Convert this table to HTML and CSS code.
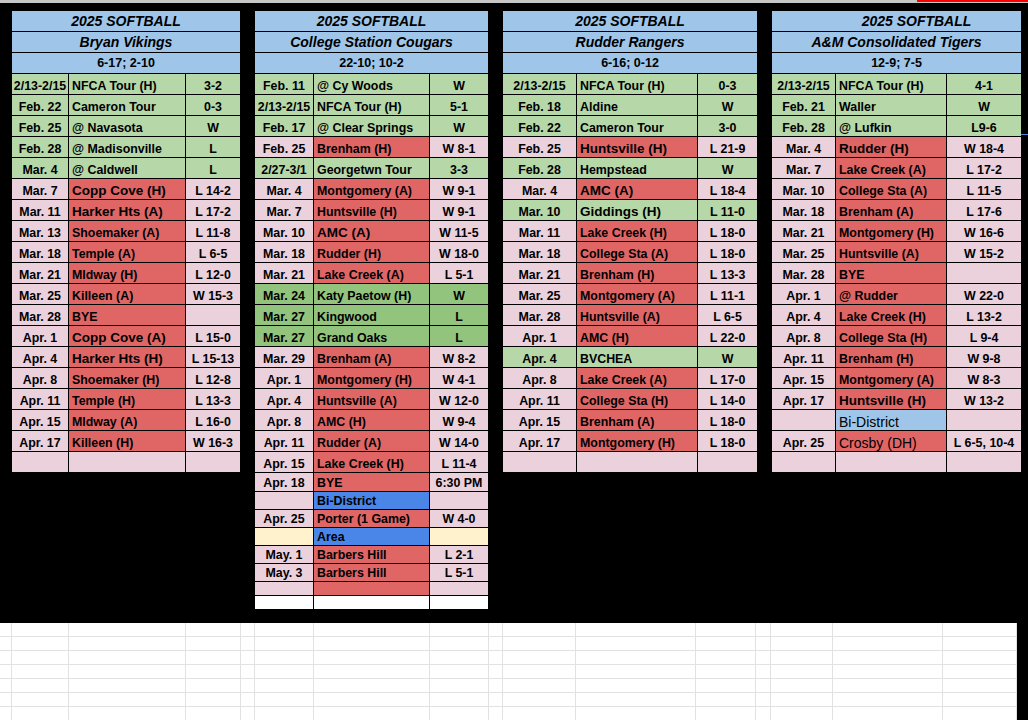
FILE: index.html
```html
<!DOCTYPE html>
<html>
<head>
<meta charset="utf-8">
<link rel="stylesheet" href="styles.css">
</head>
<body>
<div class="topbar"><div class="redline"></div></div>
<div class="tick"></div>
<div class="sheet">
  <div class="t bryan">
    <div class="hd ti">2025 SOFTBALL</div>
    <div class="hd ti">Bryan Vikings</div>
    <div class="hd rec">6-17; 2-10</div>
    <div class="c d g">2/13-2/15</div><div class="c o g">NFCA Tour (H)</div><div class="c s g">3-2</div>
    <div class="c d g">Feb. 22</div><div class="c o g">Cameron Tour</div><div class="c s g">0-3</div>
    <div class="c d g">Feb. 25</div><div class="c o g">@ Navasota</div><div class="c s g">W</div>
    <div class="c d g">Feb. 28</div><div class="c o g">@ Madisonville</div><div class="c s g">L</div>
    <div class="c d g">Mar. 4</div><div class="c o g">@ Caldwell</div><div class="c s g">L</div>
    <div class="c d p">Mar. 7</div><div class="c o rd lg">Copp Cove (H)</div><div class="c s p">L 14-2</div>
    <div class="c d p">Mar. 11</div><div class="c o rd lg">Harker Hts (A)</div><div class="c s p">L 17-2</div>
    <div class="c d p">Mar. 13</div><div class="c o rd">Shoemaker (A)</div><div class="c s p">L 11-8</div>
    <div class="c d p">Mar. 18</div><div class="c o rd">Temple (A)</div><div class="c s p">L 6-5</div>
    <div class="c d p">Mar. 21</div><div class="c o rd">Mldway (H)</div><div class="c s p">L 12-0</div>
    <div class="c d p">Mar. 25</div><div class="c o rd">Killeen (A)</div><div class="c s p">W 15-3</div>
    <div class="c d p">Mar. 28</div><div class="c o rd">BYE</div><div class="c s p"></div>
    <div class="c d p">Apr. 1</div><div class="c o rd lg">Copp Cove (A)</div><div class="c s p">L 15-0</div>
    <div class="c d p">Apr. 4</div><div class="c o rd lg">Harker Hts (H)</div><div class="c s p">L 15-13</div>
    <div class="c d p">Apr. 8</div><div class="c o rd">Shoemaker (H)</div><div class="c s p">L 12-8</div>
    <div class="c d p">Apr. 11</div><div class="c o rd">Temple (H)</div><div class="c s p">L 13-3</div>
    <div class="c d p">Apr. 15</div><div class="c o rd">Mldway (A)</div><div class="c s p">L 16-0</div>
    <div class="c d p">Apr. 17</div><div class="c o rd">Killeen (H)</div><div class="c s p">W 16-3</div>
    <div class="c d p"></div><div class="c o p"></div><div class="c s p"></div>
  </div>

  <div class="t cs">
    <div class="hd ti">2025 SOFTBALL</div>
    <div class="hd ti">College Station Cougars</div>
    <div class="hd rec">22-10; 10-2</div>
    <div class="c d g">Feb. 11</div><div class="c o g">@ Cy Woods</div><div class="c s g">W</div>
    <div class="c d g">2/13-2/15</div><div class="c o g">NFCA Tour (H)</div><div class="c s g">5-1</div>
    <div class="c d g">Feb. 17</div><div class="c o g">@ Clear Springs</div><div class="c s g">W</div>
    <div class="c d p">Feb. 25</div><div class="c o rd">Brenham (H)</div><div class="c s p">W 8-1</div>
    <div class="c d g">2/27-3/1</div><div class="c o g">Georgetwn Tour</div><div class="c s g">3-3</div>
    <div class="c d p">Mar. 4</div><div class="c o rd">Montgomery (A)</div><div class="c s p">W 9-1</div>
    <div class="c d p">Mar. 7</div><div class="c o rd">Huntsville (H)</div><div class="c s p">W 9-1</div>
    <div class="c d p">Mar. 10</div><div class="c o rd lg">AMC (A)</div><div class="c s p">W 11-5</div>
    <div class="c d p">Mar. 18</div><div class="c o rd">Rudder (H)</div><div class="c s p">W 18-0</div>
    <div class="c d p">Mar. 21</div><div class="c o rd">Lake Creek (A)</div><div class="c s p">L 5-1</div>
    <div class="c d dg">Mar. 24</div><div class="c o dg">Katy Paetow (H)</div><div class="c s dg">W</div>
    <div class="c d dg">Mar. 27</div><div class="c o dg">Kingwood</div><div class="c s dg">L</div>
    <div class="c d dg">Mar. 27</div><div class="c o dg">Grand Oaks</div><div class="c s dg">L</div>
    <div class="c d p">Mar. 29</div><div class="c o rd">Brenham (A)</div><div class="c s p">W 8-2</div>
    <div class="c d p">Apr. 1</div><div class="c o rd">Montgomery (H)</div><div class="c s p">W 4-1</div>
    <div class="c d p">Apr. 4</div><div class="c o rd">Huntsville (A)</div><div class="c s p">W 12-0</div>
    <div class="c d p">Apr. 8</div><div class="c o rd">AMC (H)</div><div class="c s p">W 9-4</div>
    <div class="c d p">Apr. 11</div><div class="c o rd">Rudder (A)</div><div class="c s p">W 14-0</div>
    <div class="c d p">Apr. 15</div><div class="c o rd">Lake Creek (H)</div><div class="c s p">L 11-4</div>
    <div class="c d p h18">Apr. 18</div><div class="c o rd h18">BYE</div><div class="c s p h18">6:30 PM</div>
    <div class="c d p h17"></div><div class="c o b h17">Bi-District</div><div class="c s p h17"></div>
    <div class="c d p h17">Apr. 25</div><div class="c o rd h17">Porter (1 Game)</div><div class="c s p h17">W 4-0</div>
    <div class="c d y h17"></div><div class="c o b h17">Area</div><div class="c s y h17"></div>
    <div class="c d p h17">May. 1</div><div class="c o rd h17">Barbers Hill</div><div class="c s p h17">L 2-1</div>
    <div class="c d p h17">May. 3</div><div class="c o rd h17">Barbers Hill</div><div class="c s p h17">L 5-1</div>
    <div class="c d p h13"></div><div class="c o rd h13"></div><div class="c s p h13"></div>
    <div class="c d w h13"></div><div class="c o w h13"></div><div class="c s w h13"></div>
  </div>

  <div class="t rud">
    <div class="hd ti">2025 SOFTBALL</div>
    <div class="hd ti">Rudder Rangers</div>
    <div class="hd rec">6-16; 0-12</div>
    <div class="c d g">2/13-2/15</div><div class="c o g">NFCA Tour (H)</div><div class="c s g">0-3</div>
    <div class="c d g">Feb. 18</div><div class="c o g">Aldine</div><div class="c s g">W</div>
    <div class="c d g">Feb. 22</div><div class="c o g">Cameron Tour</div><div class="c s g">3-0</div>
    <div class="c d p">Feb. 25</div><div class="c o rd lg">Huntsville (H)</div><div class="c s p">L 21-9</div>
    <div class="c d g">Feb. 28</div><div class="c o g">Hempstead</div><div class="c s g">W</div>
    <div class="c d p">Mar. 4</div><div class="c o rd lg">AMC (A)</div><div class="c s p">L 18-4</div>
    <div class="c d g">Mar. 10</div><div class="c o g lg">Giddings (H)</div><div class="c s g">L 11-0</div>
    <div class="c d p">Mar. 11</div><div class="c o rd">Lake Creek (H)</div><div class="c s p">L 18-0</div>
    <div class="c d p">Mar. 18</div><div class="c o rd">College Sta (A)</div><div class="c s p">L 18-0</div>
    <div class="c d p">Mar. 21</div><div class="c o rd">Brenham (H)</div><div class="c s p">L 13-3</div>
    <div class="c d p">Mar. 25</div><div class="c o rd">Montgomery (A)</div><div class="c s p">L 11-1</div>
    <div class="c d p">Mar. 28</div><div class="c o rd">Huntsville (A)</div><div class="c s p">L 6-5</div>
    <div class="c d p">Apr. 1</div><div class="c o rd">AMC (H)</div><div class="c s p">L 22-0</div>
    <div class="c d g">Apr. 4</div><div class="c o g">BVCHEA</div><div class="c s g">W</div>
    <div class="c d p">Apr. 8</div><div class="c o rd">Lake Creek (A)</div><div class="c s p">L 17-0</div>
    <div class="c d p">Apr. 11</div><div class="c o rd">College Sta (H)</div><div class="c s p">L 14-0</div>
    <div class="c d p">Apr. 15</div><div class="c o rd">Brenham (A)</div><div class="c s p">L 18-0</div>
    <div class="c d p">Apr. 17</div><div class="c o rd">Montgomery (H)</div><div class="c s p">L 18-0</div>
    <div class="c d p"></div><div class="c o p"></div><div class="c s p"></div>
  </div>

  <div class="t amc">
    <div class="hd ti shift">2025 SOFTBALL</div>
    <div class="hd ti">A&amp;M Consolidated Tigers</div>
    <div class="hd rec">12-9; 7-5</div>
    <div class="c d g">2/13-2/15</div><div class="c o g">NFCA Tour (H)</div><div class="c s g">4-1</div>
    <div class="c d g">Feb. 21</div><div class="c o g">Waller</div><div class="c s g">W</div>
    <div class="c d g">Feb. 28</div><div class="c o g">@ Lufkin</div><div class="c s g">L9-6</div>
    <div class="c d p">Mar. 4</div><div class="c o rd lg">Rudder (H)</div><div class="c s p">W 18-4</div>
    <div class="c d p">Mar. 7</div><div class="c o rd">Lake Creek (A)</div><div class="c s p">L 17-2</div>
    <div class="c d p">Mar. 10</div><div class="c o rd">College Sta (A)</div><div class="c s p">L 11-5</div>
    <div class="c d p">Mar. 18</div><div class="c o rd">Brenham (A)</div><div class="c s p">L 17-6</div>
    <div class="c d p">Mar. 21</div><div class="c o rd">Montgomery (H)</div><div class="c s p">W 16-6</div>
    <div class="c d p">Mar. 25</div><div class="c o rd">Huntsville (A)</div><div class="c s p">W 15-2</div>
    <div class="c d p">Mar. 28</div><div class="c o rd">BYE</div><div class="c s p"></div>
    <div class="c d p">Apr. 1</div><div class="c o rd">@ Rudder</div><div class="c s p">W 22-0</div>
    <div class="c d p">Apr. 4</div><div class="c o rd">Lake Creek (H)</div><div class="c s p">L 13-2</div>
    <div class="c d p">Apr. 8</div><div class="c o rd">College Sta (H)</div><div class="c s p">L 9-4</div>
    <div class="c d p">Apr. 11</div><div class="c o rd">Brenham (H)</div><div class="c s p">W 9-8</div>
    <div class="c d p">Apr. 15</div><div class="c o rd">Montgomery (A)</div><div class="c s p">W 8-3</div>
    <div class="c d p">Apr. 17</div><div class="c o rd lg">Huntsville (H)</div><div class="c s p">W 13-2</div>
    <div class="c d p"></div><div class="c o lb lgr">Bi-District</div><div class="c s p"></div>
    <div class="c d p">Apr. 25</div><div class="c o rd lgr">Crosby (DH)</div><div class="c s p">L 6-5, 10-4</div>
    <div class="c d p"></div><div class="c o p"></div><div class="c s p"></div>
  </div>
</div>
<div class="grid">
  <div class="gc w11"></div>
  <div class="gc w57"></div>
  <div class="gc w117"></div>
  <div class="gc w55"></div>
  <div class="gc w14"></div>
  <div class="gc w59"></div>
  <div class="gc w116"></div>
  <div class="gc w59"></div>
  <div class="gc w14"></div>
  <div class="gc w73"></div>
  <div class="gc w120"></div>
  <div class="gc w60"></div>
  <div class="gc w15"></div>
  <div class="gc w62"></div>
  <div class="gc w110"></div>
  <div class="gc w74"></div>
  <div class="gblack"></div>
</div>
</body>
</html>
```

FILE: styles.css
```css
* { box-sizing: border-box; }
html, body { margin: 0; padding: 0; }
body {
  width: 1028px;
  height: 720px;
  overflow: hidden;
  background: #ffffff;
  font-family: "Liberation Sans", Arial, sans-serif;
  color: #000;
  position: relative;
}
.topbar {
  height: 3px;
  background: #c6c6c6;
  position: relative;
}
.redline {
  position: absolute;
  left: 917px;
  top: 0;
  width: 111px;
  height: 2px;
  background: #ff0000;
}
.tick {
  position: absolute;
  left: 1021px;
  top: 134px;
  width: 7px;
  height: 1px;
  background: #4a86e8;
}
.sheet {
  height: 620px;
  background: #000;
  display: flex;
  align-items: flex-start;
  gap: 15px;
  padding: 8px 0 0 12px;
}
.t {
  display: grid;
  gap: 1px;
  background: #000;
}
.bryan { width: 228px; grid-template-columns: 56px 116px 54px; }
.cs { width: 233px; grid-template-columns: 58px 115px 58px; }
.rud { width: 254px; grid-template-columns: 73px 120px 59px; }
.amc { width: 249px; grid-template-columns: 63px 110px 74px; }

.hd {
  grid-column: 1 / -1;
  height: 20px;
  background: #9fc5e8;
  display: flex;
  align-items: center;
  justify-content: center;
  white-space: nowrap;
  font-weight: bold;
}
.ti { font-style: italic; font-size: 14px; line-height: 16px; }
.rec { font-size: 12.5px; line-height: 15px; }
.shift { padding-left: 40px; }

.c {
  height: 20px;
  display: flex;
  align-items: flex-end;
  white-space: nowrap;
  overflow: visible;
  font-size: 12.4px;
  font-weight: bold;
  line-height: 15px;
}
.d, .s { justify-content: center; }
.o { padding-left: 3px; }
.lg { font-size: 13.5px; line-height: 16px; }
.lgr { font-size: 14px; line-height: 16px; font-weight: normal; }

.h18 { height: 18px; }
.h17 { height: 17px; }
.h13 { height: 13px; }

.g { background: #b6d7a8; }
.dg { background: #93c47d; }
.p { background: #ead1dc; }
.rd { background: #e06666; }
.b { background: #4a86e8; }
.lb { background: #9fc5e8; }
.y { background: #fff2cc; }
.w { background: #ffffff; }

.grid {
  height: 97px;
  display: flex;
  background: repeating-linear-gradient(to bottom, transparent 0, transparent 13px, #e2e2e2 13px, #e2e2e2 14px);
}
.gc { height: 100%; border-right: 1px solid #e2e2e2; }
.gblack { flex: 1; background: #000; }
.w11 { width: 12px; }
.w57 { width: 57px; }
.w117 { width: 117px; }
.w55 { width: 55px; }
.w14 { width: 14px; }
.w59 { width: 59px; }
.w116 { width: 116px; }
.w60 { width: 60px; }
.w15 { width: 15px; }
.w73 { width: 73px; }
.w120 { width: 120px; }
.w62 { width: 62px; }
.w110 { width: 110px; }
.w74 { width: 74px; }
```
